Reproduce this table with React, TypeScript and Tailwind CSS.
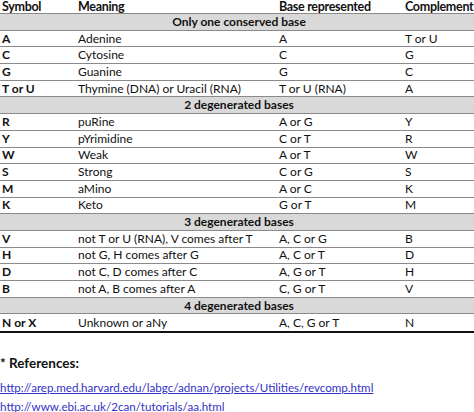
const rows: (string[] | string)[] = [
  "Only one conserved base",
  ["A", "Adenine", "A", "T or U"],
  ["C", "Cytosine", "C", "G"],
  ["G", "Guanine", "G", "C"],
  ["T or U", "Thymine (DNA) or Uracil (RNA)", "T or U (RNA)", "A"],
  "2 degenerated bases",
  ["R", "puRine", "A or G", "Y"],
  ["Y", "pYrimidine", "C or T", "R"],
  ["W", "Weak", "A or T", "W"],
  ["S", "Strong", "C or G", "S"],
  ["M", "aMino", "A or C", "K"],
  ["K", "Keto", "G or T", "M"],
  "3 degenerated bases",
  ["V", "not T or U (RNA), V comes after T", "A, C or G", "B"],
  ["H", "not G, H comes after G", "A, C or T", "D"],
  ["D", "not C, D comes after C", "A, G or T", "H"],
  ["B", "not A, B comes after A", "C, G or T", "V"],
  "4 degenerated bases",
  ["N or X", "Unknown or aNy", "A, C, G or T", "N"],
];

const cols = "grid grid-cols-[76px_201px_126px_1fr] pl-[2px]";

export default function App() {
  return (
    <div className="w-[474px] h-[412px] overflow-hidden bg-white text-[#111] font-['Lato',sans-serif]">
      <div className={`${cols} h-[13px] items-end text-[12.5px] font-bold leading-none tracking-[-0.3px] whitespace-nowrap`}>
        <span>Symbol</span>
        <span>Meaning</span>
        <span>Base represented</span>
        <span>Complement</span>
      </div>
      <div className="border-t border-[#8a8a8a] border-b-2 border-b-[#111]">
        {rows.map((r, i) =>
          typeof r === "string" ? (
            <div
              key={i}
              className="h-[16.7px] flex items-center justify-center pl-[4px] bg-[#d9d9d9] border-b border-[#8a8a8a] text-[12px] font-bold leading-none"
            >
              {r}
            </div>
          ) : (
            <div
              key={i}
              className={`${cols} h-[16.7px] items-center text-[12px] leading-none ${i === rows.length - 1 ? "" : "border-b border-[#8a8a8a]"}`}
            >
              <span className="font-bold">{r[0]}</span>
              <span>{r[1]}</span>
              <span>{r[2]}</span>
              <span>{r[3]}</span>
            </div>
          )
        )}
      </div>
      <div className="mt-[24px] text-[13.5px] font-bold leading-none">* References:</div>
      <div className="mt-[11px] flex flex-col gap-[8px] text-[11.6px] leading-none text-[#3232c8] underline">
        <span>http://arep.med.harvard.edu/labgc/adnan/projects/Utilities/revcomp.html</span>
        <span>http://www.ebi.ac.uk/2can/tutorials/aa.html</span>
      </div>
    </div>
  );
}
